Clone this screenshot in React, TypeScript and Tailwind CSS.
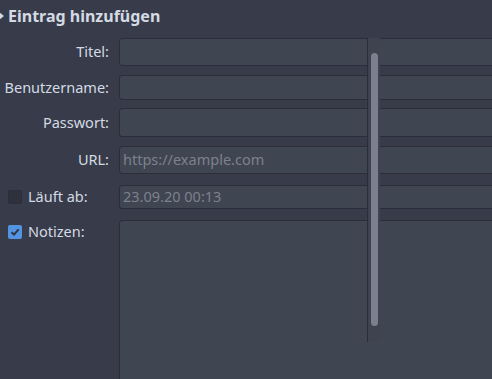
import React from "react";

const font = { fontFamily: '"Noto Sans", "Open Sans", sans-serif' };

function Label({ children, h }: { children: React.ReactNode; h: string }) {
  return (
    <div className={`flex items-center justify-end pr-[10px] text-[14.5px] text-[#d3dae3] ${h}`}>
      {children}
    </div>
  );
}

function Input({ h, text, muted }: { h: string; text?: string; muted?: boolean }) {
  return (
    <div
      className={`${h} flex items-center rounded-[3px] border border-[#2b2e39] bg-[#404552] pl-[3px] text-[14.5px] ${
        muted ? "text-[#7c818c]" : "text-[#d3dae3]"
      }`}
    >
      {text}
    </div>
  );
}

function Check({ checked }: { checked?: boolean }) {
  return checked ? (
    <div className="flex h-[14px] w-[14px] items-center justify-center rounded-[2px] bg-[#5294e2]">
      <svg width="10" height="10" viewBox="0 0 10 10">
        <path d="M1.5 5.2 L4 7.6 L8.6 2.4" stroke="#2f3440" strokeWidth="2" fill="none" />
      </svg>
    </div>
  ) : (
    <div className="h-[14px] w-[14px] rounded-[2px] border border-[#2b2e39] bg-[#2f323e]" />
  );
}

export default function App() {
  return (
    <div className="relative h-[379px] w-[492px] overflow-hidden bg-[#383c4a]" style={font}>
      <div className="flex h-[32px] items-center gap-[4px]">
        <svg width="5" height="8" viewBox="0 0 5 8" className="ml-[-1px]">
          <path d="M0 0 L5 4 L0 8 Z" fill="#d3dae3" />
        </svg>
        <span className="text-[16px] font-bold text-[#d3dae3]">Eintrag hinzufügen</span>
      </div>
      <div className="mt-[6px] grid w-[600px] grid-cols-[119px_1fr]">
        <Label h="h-[28px]">Titel:</Label>
        <Input h="h-[28px]" />
        <div className="col-span-2 h-[9px]" />
        <Label h="h-[25px]">Benutzername:</Label>
        <Input h="h-[25px]" />
        <div className="col-span-2 h-[8px]" />
        <Label h="h-[29px]">Passwort:</Label>
        <Input h="h-[29px]" />
        <div className="col-span-2 h-[9px]" />
        <Label h="h-[28px]">URL:</Label>
        <Input h="h-[28px]" text="https://example.com" muted />
        <div className="col-span-2 h-[11px]" />
        <div className="flex h-[24px] items-center gap-[6px] pl-[8px] text-[14.5px] text-[#d3dae3]">
          <Check />
          <span>Läuft ab:</span>
        </div>
        <Input h="h-[24px]" text="23.09.20 00:13" muted />
        <div className="col-span-2 h-[11px]" />
        <div className="flex h-[24px] items-center gap-[6px] pl-[8px] text-[14.5px] text-[#d3dae3]">
          <Check checked />
          <span>Notizen:</span>
        </div>
        <div className="row-span-2 h-[200px] rounded-[3px] border border-[#2b2e39] bg-[#404552]" />
      </div>
      <div className="absolute left-[367px] top-[38px] h-[304px] w-[13px] border-l border-[#2b2e39] bg-[#3f4350]">
        <div className="absolute left-[3px] top-[15px] h-[273px] w-[7px] rounded-full bg-[#7b7f8e]" />
      </div>
    </div>
  );
}
